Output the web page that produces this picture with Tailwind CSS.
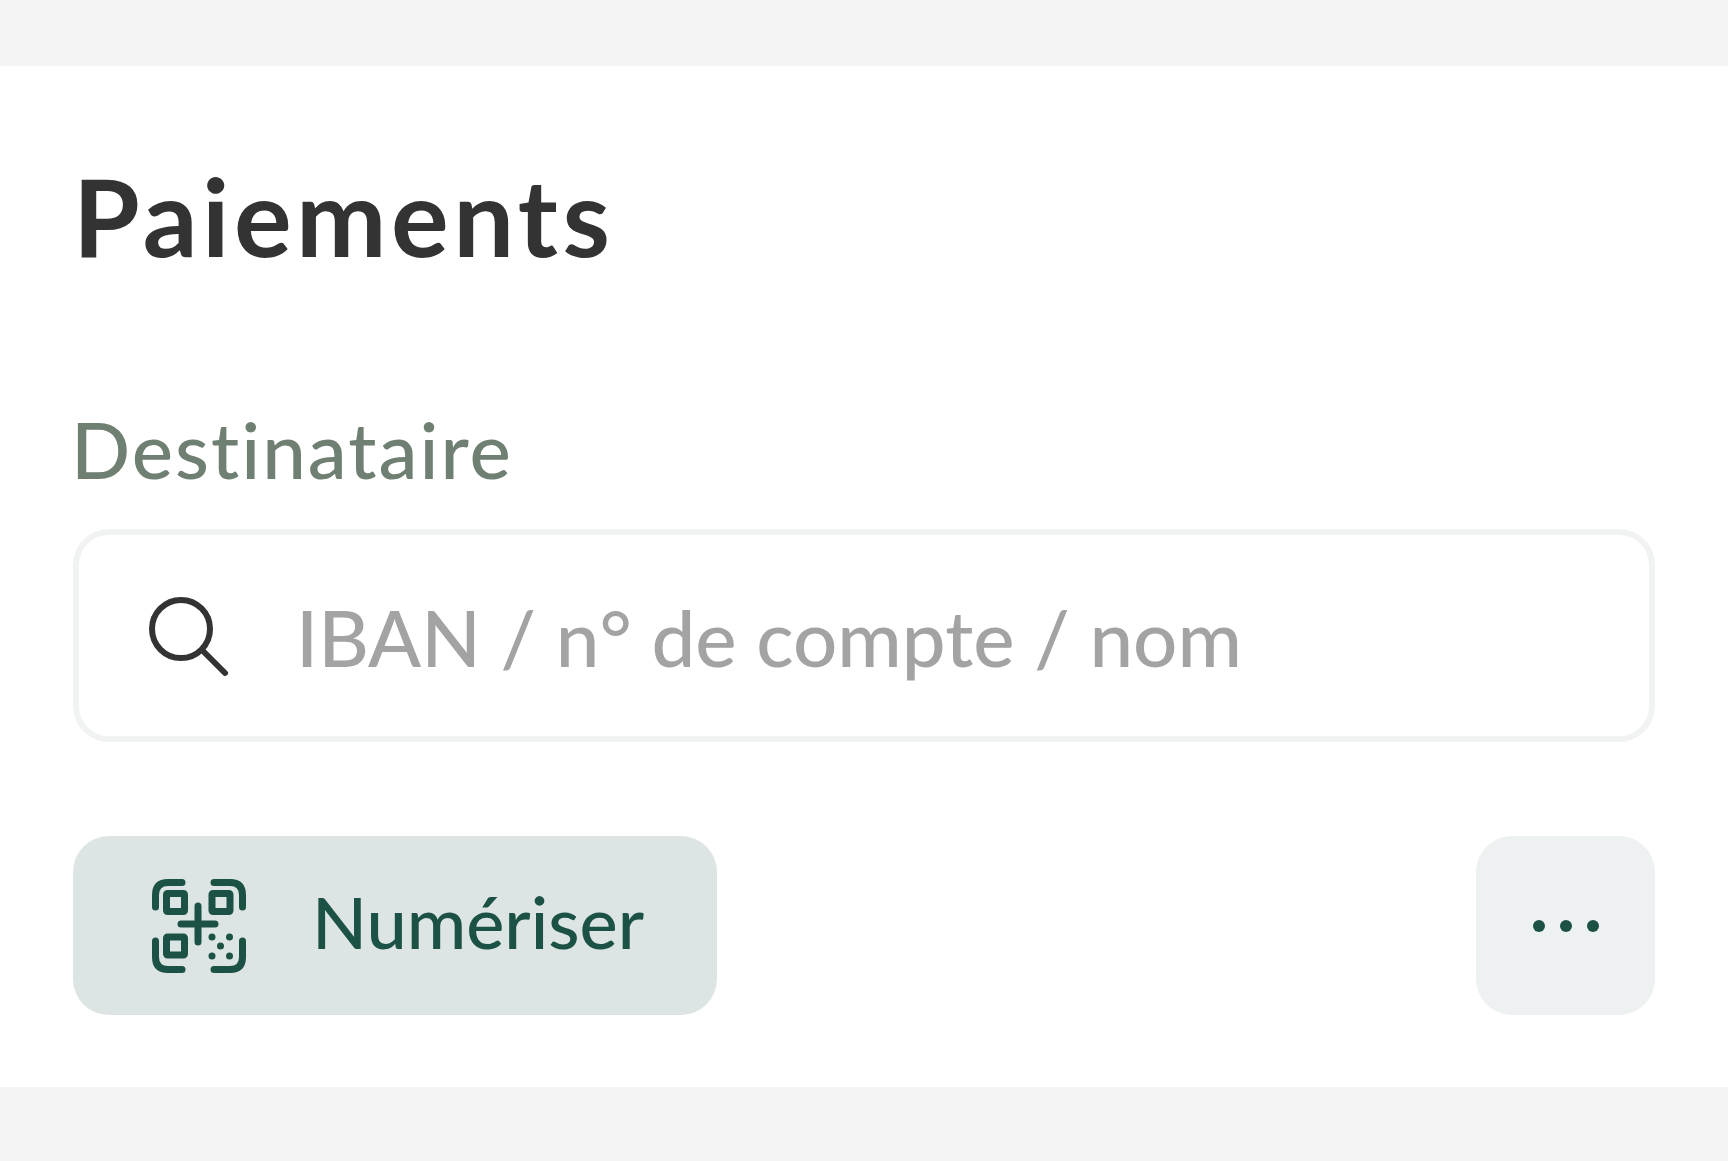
<!DOCTYPE html>
<html lang="fr">
<head>
    <meta charset="UTF-8">
    <title>Paiements</title>
    <script src="https://cdn.jsdelivr.net/npm/@tailwindcss/browser@4"></script>
</head>
<body class="bg-[#f4f4f4] font-['Lato',sans-serif] overflow-hidden">
    <div class="h-[1161px] pt-[66px]">
        <!-- Carte paiements -->
        <section class="bg-white h-[1021px] px-[73px] pt-[85px]">
            <h1 class="text-[108px] leading-[128px] font-bold text-[#333333] tracking-[4.500px]">Paiements</h1>

            <label class="block mt-[122px] text-[78px] leading-[96px] font-medium text-[#6f7f72] tracking-[2px] -ml-[2px]">Destinataire</label>

            <!-- Champ de recherche -->
            <div class="mt-[32px] h-[213px] border-[6px] border-[#f0f3f2] rounded-[36px] flex items-center pl-[70px]">
                <svg class="w-[82px] h-[82px] shrink-0 mt-[5px]" viewBox="0 0 82 82" fill="none" stroke="#333333" stroke-width="6" stroke-linecap="round">
                    <circle cx="32" cy="32" r="29"></circle>
                    <path d="M53 53l23 23"></path>
                </svg>
                <span class="ml-[65px] mt-[2px] text-[78px] leading-none font-medium text-[#a3a3a3]">IBAN / n° de compte / nom</span>
            </div>

            <!-- Actions -->
            <div class="mt-[94px] flex justify-between">
                <button class="w-[644px] h-[179px] rounded-[36px] bg-[#dce5e3] flex items-center pl-[79px]">
                    <svg class="w-[94px] h-[94px] shrink-0" viewBox="0 0 94 94" fill="none" stroke="#1c5245" stroke-width="7" stroke-linecap="round">
                        <path d="M3.500 28V16Q3.500 3.500 16 3.500H30"></path>
                        <path d="M62 3.500H78Q90.500 3.500 90.500 16V28"></path>
                        <path d="M3.500 62V78Q3.500 90.500 16 90.500H30"></path>
                        <path d="M62 90.500H78Q90.500 90.500 90.500 78V62"></path>
                        <rect x="14.500" y="14.500" width="18" height="18" rx="1"></rect>
                        <rect x="60" y="14.500" width="18" height="18" rx="1"></rect>
                        <rect x="14.500" y="58" width="18" height="18" rx="1"></rect>
                        <path d="M46 27V63M29 45H63"></path>
                        <g fill="#1c5245" stroke="none">
                            <circle cx="60" cy="58" r="3.500"></circle>
                            <circle cx="77.500" cy="58" r="3.500"></circle>
                            <circle cx="68.500" cy="67" r="3.500"></circle>
                            <circle cx="60" cy="77" r="3.500"></circle>
                            <circle cx="77.500" cy="77" r="3.500"></circle>
                        </g>
                    </svg>
                    <span class="ml-[66px] pb-[9px] text-[72px] leading-none font-medium text-[#1c5245]">Numériser</span>
                </button>
                <button class="w-[179px] h-[179px] rounded-[36px] bg-[#eef1f1] flex items-center justify-center gap-[15px]">
                    <span class="w-[12px] h-[12px] rounded-full bg-[#1c5245]"></span>
                    <span class="w-[12px] h-[12px] rounded-full bg-[#1c5245]"></span>
                    <span class="w-[12px] h-[12px] rounded-full bg-[#1c5245]"></span>
                </button>
            </div>
        </section>
    </div>
</body>
</html>
